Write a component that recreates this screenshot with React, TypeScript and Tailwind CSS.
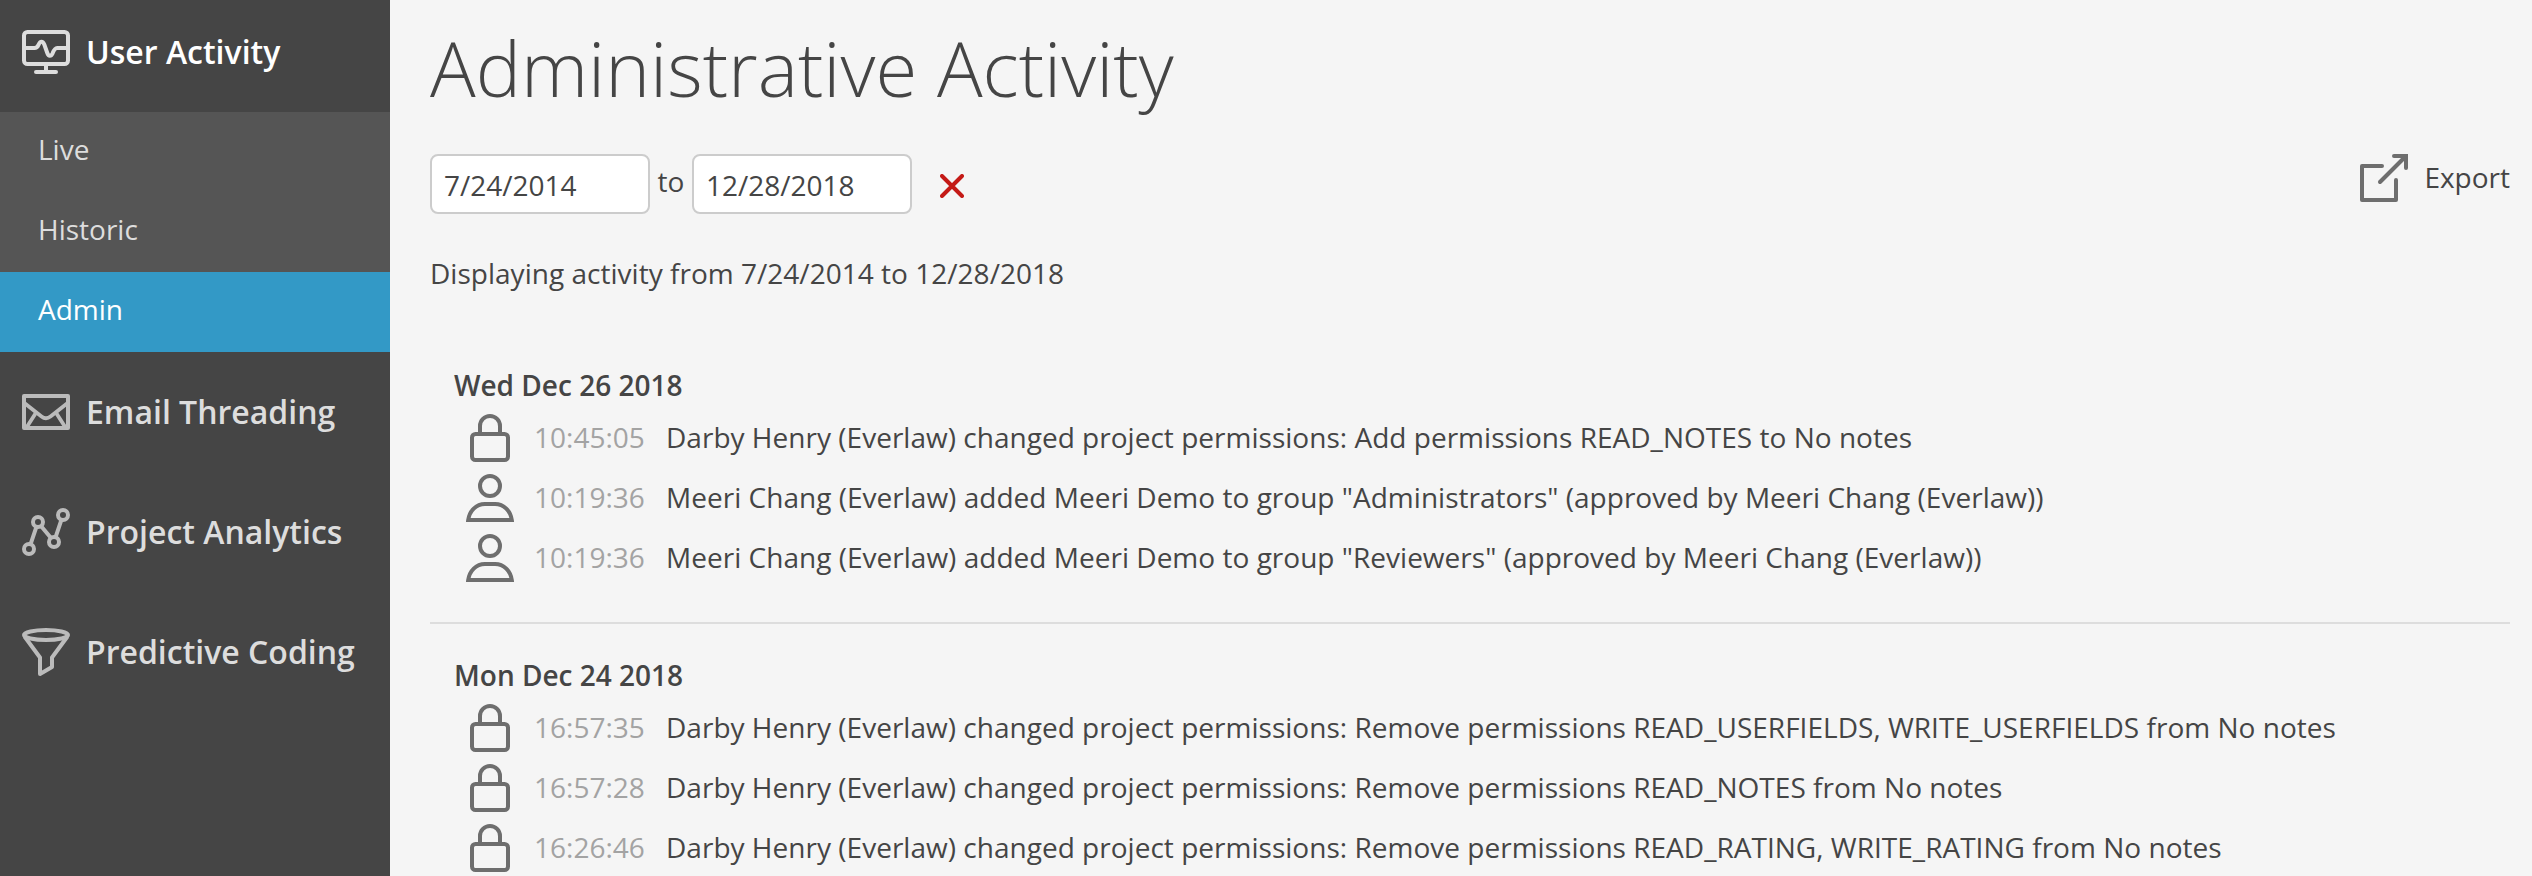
import type { ReactNode } from "react";

type IconProps = { className?: string };

function Svg({ className = "", children }: { className?: string; children: ReactNode }) {
  return (
    <svg
      viewBox="0 0 48 48"
      fill="none"
      stroke="currentColor"
      strokeWidth={4}
      className={`size-12 shrink-0 ${className}`}
    >
      {children}
    </svg>
  );
}

const MonitorIcon = ({ className }: IconProps) => (
  <Svg className={className}>
    <rect x="2" y="4" width="44" height="32" rx="3.5" />
    <path d="M4 20h8.500c2 0 3-1 4-3.200 1.800-4 4.200-4 5.800-0.300l3 8.500c1.300 3.600 3.700 3.600 5.300 0.300 1.500-3.800 2.500-5.300 4.500-5.300H44" />
    <path d="M24 36v8" />
    <path d="M14 44h20" strokeLinecap="round" />
  </Svg>
);

const MailIcon = ({ className }: IconProps) => (
  <Svg className={className}>
    <rect x="2" y="8" width="44" height="32" strokeLinejoin="round" />
    <path d="M3 15.500l16.500 13c3 2.300 6 2.300 9 0L45 15.500" strokeWidth="3.800" />
    <path d="M4.500 39.500L13.500 25.500M43.500 39.500L34.500 25.500" strokeWidth="3.800" />
  </Svg>
);

const GraphIcon = ({ className }: IconProps) => (
  <Svg className={className}>
    <circle cx="7" cy="41" r="5" />
    <circle cx="16" cy="14" r="5" />
    <circle cx="32" cy="34" r="5" />
    <circle cx="41" cy="7" r="5" />
    <path d="M8.600 36.200L14.400 18.800M19 18L29 30M33.600 29.200L39.400 11.800" />
  </Svg>
);

const FunnelIcon = ({ className }: IconProps) => (
  <Svg className={className}>
    <ellipse cx="24" cy="7" rx="22" ry="5" />
    <path d="M2.500 8.500L18 29.500v16.500l12-7V29.500L45.500 8.500" strokeLinejoin="round" />
  </Svg>
);

const ExportIcon = ({ className }: IconProps) => (
  <Svg className={className}>
    <path d="M22 12H2v34h34V26" strokeLinecap="round" strokeLinejoin="round" />
    <path d="M20 28L44 4" strokeLinecap="round" />
    <path d="M34 2h12v12" strokeLinecap="round" />
  </Svg>
);

const LockIcon = ({ className }: IconProps) => (
  <Svg className={className}>
    <rect x="6" y="20" width="36" height="26" rx="3.500" />
    <path d="M14 20v-8a10 10 0 0 1 20 0v8" />
  </Svg>
);

const UserIcon = ({ className }: IconProps) => (
  <Svg className={className}>
    <circle cx="24" cy="12" r="10" />
    <path d="M2.200 46C3.500 37 10 30 19 30h10c9 0 15.500 7 16.800 16z" />
  </Svg>
);

const CloseIcon = () => (
  <svg viewBox="0 0 24 24" fill="none" stroke="currentColor" strokeWidth={4} strokeLinecap="round" className="size-6">
    <path d="M2 2l20 20M22 2L2 22" />
  </svg>
);

const subItems = [
  { label: "Live", active: false },
  { label: "Historic", active: false },
  { label: "Admin", active: true },
];

const sections = [
  { label: "Email Threading", Icon: MailIcon },
  { label: "Project Analytics", Icon: GraphIcon },
  { label: "Predictive Coding", Icon: FunnelIcon },
];

const days = [
  {
    date: "Wed Dec 26 2018",
    events: [
      { Icon: LockIcon, time: "10:45:05", text: "Darby Henry (Everlaw) changed project permissions: Add permissions READ_NOTES to No notes" },
      { Icon: UserIcon, time: "10:19:36", text: 'Meeri Chang (Everlaw) added Meeri Demo to group "Administrators" (approved by Meeri Chang (Everlaw))' },
      { Icon: UserIcon, time: "10:19:36", text: 'Meeri Chang (Everlaw) added Meeri Demo to group "Reviewers" (approved by Meeri Chang (Everlaw))' },
    ],
  },
  {
    date: "Mon Dec 24 2018",
    events: [
      { Icon: LockIcon, time: "16:57:35", text: "Darby Henry (Everlaw) changed project permissions: Remove permissions READ_USERFIELDS, WRITE_USERFIELDS from No notes" },
      { Icon: LockIcon, time: "16:57:28", text: "Darby Henry (Everlaw) changed project permissions: Remove permissions READ_NOTES from No notes" },
      { Icon: LockIcon, time: "16:26:46", text: "Darby Henry (Everlaw) changed project permissions: Remove permissions READ_RATING, WRITE_RATING from No notes" },
    ],
  },
];

function DateField({ value }: { value: string }) {
  return (
    <div className="h-[60px] w-[220px] rounded-lg border-2 border-[#cccccc] bg-white pt-[9px] pl-3 leading-10">
      {value}
    </div>
  );
}

export default function App() {
  return (
    <div className="flex h-[876px] w-[2532px] overflow-hidden bg-[#f5f5f5] font-['Open_Sans',sans-serif] text-[28px] whitespace-nowrap text-[#454545]">
      <nav className="w-[390px] shrink-0 bg-[#454545] text-[#dddddd]">
        <div className="flex h-28 items-center gap-4 pb-2 pl-[22px] text-[32px] font-semibold text-white">
          <MonitorIcon className="text-[#dddddd]" />
          <span>User Activity</span>
        </div>
        {subItems.map((item) => (
          <div
            key={item.label}
            className={`flex h-20 items-center pb-1.5 pl-[38px] ${item.active ? "bg-[#3399c6] text-white" : "bg-[#555555]"}`}
          >
            {item.label}
          </div>
        ))}
        {sections.map(({ label, Icon }) => (
          <div key={label} className="flex h-[120px] items-center gap-4 pl-[22px] text-[32px] font-semibold">
            <Icon className="text-[#bbbbbb]" />
            <span>{label}</span>
          </div>
        ))}
      </nav>

      <main className="w-[2142px] pr-[22px] pl-10">
        <h1 className="pt-[18px] text-[76px] leading-[100px] font-light">Administrative Activity</h1>
        <div className="mt-9 flex h-[60px] justify-between">
          <div className="flex">
            <DateField value="7/24/2014" />
            <span className="w-[42px] pt-[7px] text-center leading-10">to</span>
            <DateField value="12/28/2018" />
            <span className="pt-5 pl-7 text-[#c41a16]">
              <CloseIcon />
            </span>
          </div>
          <div className="flex h-12 gap-4">
            <ExportIcon className="text-[#6e6e6e]" />
            <span className="pt-[3px] leading-10">Export</span>
          </div>
        </div>
        <p className="mt-[39px] leading-10 tracking-[0.02px]">Displaying activity from 7/24/2014 to 12/28/2018</p>

        <div className="mt-[39px]">
          {days.map((day) => (
            <section
              key={day.date}
              className="h-[290px] border-t-2 border-[#dddddd] pt-[31px] pl-6 first:border-transparent"
            >
              <h2 className="h-[43px] leading-10 font-semibold">{day.date}</h2>
              {day.events.map((event, i) => (
                <div key={i} className="flex h-[60px] items-center">
                  <event.Icon className="ml-3 text-[#6e6e6e]" />
                  <span className="ml-5 w-[132px] pb-0.5 text-[#a3a3a3]">{event.time}</span>
                  <span className="pb-0.5 tracking-[0.02px]">{event.text}</span>
                </div>
              ))}
            </section>
          ))}
        </div>
      </main>
    </div>
  );
}
